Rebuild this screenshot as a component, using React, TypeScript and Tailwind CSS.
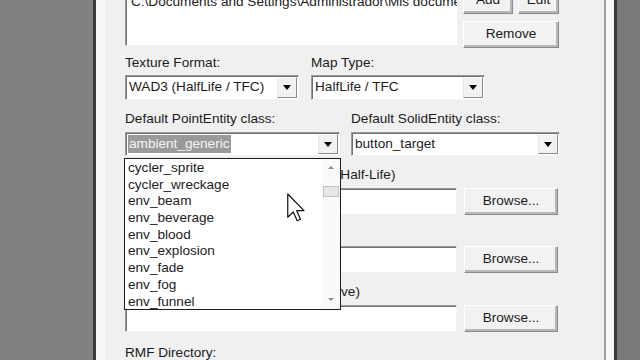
import type { ReactNode } from "react";

const sunken =
  "bg-white border border-t-[#9a9a9a] border-l-[#9a9a9a] border-r-[#f4f4f4] border-b-[#f4f4f4] shadow-[inset_1px_1px_0_#707070]";
const raised =
  "bg-[#f2f2f2] border border-t-white border-l-white border-r-[#8a8a8a] border-b-[#8a8a8a] shadow-[inset_-2px_-2px_0_#b8b8b8] flex items-center justify-center";

const Button = ({ label, className }: { label: string; className: string }) => (
  <div className={`${raised} ${className}`}>{label}</div>
);

const Label = ({ text, className = "" }: { text: string; className?: string }) => (
  <div className={`h-[16px] leading-[16px] whitespace-nowrap ${className}`}>{text}</div>
);

const Combo = ({ className, children }: { className: string; children: ReactNode }) => (
  <div className={`${sunken} flex items-stretch ${className}`}>
    <div className="flex-1 flex items-center pl-[3px] overflow-hidden whitespace-nowrap">{children}</div>
    <div className="w-[20px] my-[1px] mr-[1px] bg-[#f2f2f2] border border-t-white border-l-[#e8e8e8] border-r-[#8a8a8a] border-b-[#8a8a8a] flex items-center justify-center">
      <div className="w-0 h-0 border-l-[4px] border-r-[4px] border-t-[5px] border-l-transparent border-r-transparent border-t-black" />
    </div>
  </div>
);

const PathRow = ({ label, className }: { label: string; className: string }) => (
  <div className={className}>
    <Label text={label} />
    <div className="mt-[5px] flex gap-[7px]">
      <div className={`${sunken} w-[332px] h-[27px]`} />
      <Button label="Browse..." className="w-[94px] h-[27px]" />
    </div>
  </div>
);

const entities = [
  "cycler_sprite",
  "cycler_wreckage",
  "env_beam",
  "env_beverage",
  "env_blood",
  "env_explosion",
  "env_fade",
  "env_fog",
  "env_funnel",
];

export default function App() {
  return (
    <div className="relative w-[640px] h-[360px] overflow-hidden bg-[#808080] flex font-['Liberation_Sans',Arial,sans-serif] text-[13.6px] text-[#1c1c1c]">
      <div className="w-[93px] shrink-0" />
      <div className="w-[3px] bg-[#3a3a3a] shrink-0" />
      <div className="w-[9px] bg-[#f8f8f8] shrink-0" />

      {/* main panel */}
      <div className="w-[501px] shrink-0 bg-[#f0f0f0] border-r-2 border-[#a0a0a0] pl-[20px]">
        {/* directories list + buttons */}
        <div className="flex -mt-[14px]">
          <div className={`${sunken} w-[333px] h-[60px] pl-[5px] pt-[7px] leading-[16px] whitespace-nowrap overflow-hidden`}>
            {"C:\\Documents and Settings\\Administrador\\Mis documentos\\Hammer"}
          </div>
          <div className="ml-[5px] flex flex-col">
            <div className="flex gap-[5px]">
              <Button label="Add" className="w-[50px] h-[28px]" />
              <Button label="Edit" className="w-[41px] h-[28px]" />
            </div>
            <Button label="Remove" className="mt-[7px] w-[96px] h-[27px]" />
          </div>
        </div>

        <div className="mt-[7px] flex gap-[12px]">
          <div className="w-[174px]">
            <Label text="Texture Format:" />
            <Combo className="mt-[4px] h-[25px] w-[174px]">WAD3 (HalfLife / TFC)</Combo>
          </div>
          <div className="w-[174px]">
            <Label text="Map Type:" />
            <Combo className="mt-[4px] h-[25px] w-[174px]">HalfLife / TFC</Combo>
          </div>
        </div>

        <div className="mt-[11px] flex gap-[11px]">
          <div className="w-[215px]">
            <Label text="Default PointEntity class:" />
            <Combo className="mt-[5px] h-[24px] w-[215px]">
              <span className="bg-[#9a9a9a] text-[#f4f4f4] leading-[18px] px-[1px] -ml-[1px]">ambient_generic</span>
            </Combo>
          </div>
          <div className="w-[209px]">
            <Label text="Default SolidEntity class:" />
            <Combo className="mt-[5px] h-[24px] w-[209px]">button_target</Combo>
          </div>
        </div>

        <PathRow label="Game Executable Directory (e.g. c:\Half-Life)" className="mt-[11px]" />
        <PathRow label="Mod Directory (e.g. tfc)" className="mt-[10px]" />
        <PathRow label="Game Directory (e.g. c:\Half-Life\valve)" className="mt-[11px]" />
        <Label text="RMF Directory:" className="mt-[13px]" />
      </div>

      <div className="w-[8px] bg-[#f8f8f8] shrink-0" />
      <div className="w-[3px] bg-[#3a3a3a] shrink-0" />
      <div className="flex-1 bg-[#7a7a7a]" />

      {/* open dropdown list */}
      <div className="absolute left-[124px] top-[158px] w-[217px] h-[152px] bg-white border border-[#1e1e1e] flex">
        <div className="flex-1 pl-[3px] pt-[1px] overflow-hidden">
          {entities.map((e) => (
            <div key={e} className="h-[16.7px] leading-[16.7px] whitespace-nowrap">
              {e}
            </div>
          ))}
        </div>
        <div className="w-[19px] bg-[#fafafa] flex flex-col items-center">
          <div className="mt-[7px] w-0 h-0 border-l-[3px] border-r-[3px] border-b-[3px] border-l-transparent border-r-transparent border-b-[#8a8a8a]" />
          <div className="mt-[17px] w-[16px] h-[11px] bg-[#e6e6e6] border border-[#c4c4c4]" />
          <div className="flex-1" />
          <div className="mb-[8px] w-0 h-0 border-l-[3px] border-r-[3px] border-t-[3px] border-l-transparent border-r-transparent border-t-[#8a8a8a]" />
        </div>
      </div>

      {/* mouse pointer */}
      <svg className="absolute left-[287px] top-[193px]" width="18" height="29" viewBox="0 0 12 19">
        <path
          d="M0.5 0.5 L0.5 16 L4.2 12.5 L6.8 18.3 L9 17.3 L6.5 11.6 L11.3 11.6 Z"
          fill="white"
          stroke="#111"
          strokeWidth="0.8"
          strokeLinejoin="round"
        />
      </svg>
    </div>
  );
}
